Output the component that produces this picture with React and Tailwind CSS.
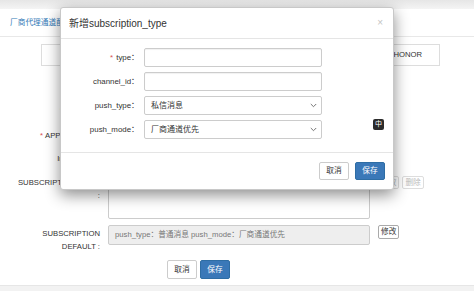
import React from 'react';

const FieldLabel = ({ children, required }) => (
  <div className="w-[78px] shrink-0 text-right text-[7.9px] text-[#333]">
    {required && <span className="text-[#d9534f] mr-[3px]">*</span>}
    {children}
  </div>
);

const Chevron = () => (
  <svg width="7" height="5" viewBox="0 0 7 5" className="text-[#666]">
    <path d="M0.8 1 L3.5 3.7 L6.2 1" fill="none" stroke="currentColor" strokeWidth="0.9" />
  </svg>
);

const Modal = () => (
  <div className="absolute left-[60px] top-[7px] w-[334px] h-[183px] bg-white rounded-[3px] border border-[#c8c8c8] shadow-[0_5px_15px_rgba(0,0,0,0.45)] flex flex-col">
    <div className="h-[31px] shrink-0 flex items-center justify-between pl-[8px] pr-[10px] border-b border-[#e5e5e5]">
      <span className="text-[10px] text-[#333]">新增subscription_type</span>
      <span className="text-[10px] text-[#c4c4c4] leading-none">×</span>
    </div>
    <div className="flex-1 flex flex-col gap-[5px] pt-[9px]">
      <div className="flex items-center gap-[5px]">
        <FieldLabel required>type：</FieldLabel>
        <div className="w-[178px] h-[19px] border border-[#ccc] rounded-[2px] shadow-[inset_0_1px_1px_rgba(0,0,0,0.06)]" />
      </div>
      <div className="flex items-center gap-[5px]">
        <FieldLabel>channel_id：</FieldLabel>
        <div className="w-[178px] h-[19px] border border-[#ccc] rounded-[2px] shadow-[inset_0_1px_1px_rgba(0,0,0,0.06)]" />
      </div>
      <div className="flex items-center gap-[5px]">
        <FieldLabel>push_type：</FieldLabel>
        <div className="w-[178px] h-[19px] border border-[#ccc] rounded-[2px] flex items-center justify-between pl-[6px] pr-[4px] text-[8px] text-[#333]">
          <span>私信消息</span>
          <Chevron />
        </div>
      </div>
      <div className="flex items-center gap-[5px]">
        <FieldLabel>push_mode：</FieldLabel>
        <div className="w-[178px] h-[19px] border border-[#ccc] rounded-[2px] flex items-center justify-between pl-[6px] pr-[4px] text-[8px] text-[#333]">
          <span>厂商通道优先</span>
          <Chevron />
        </div>
      </div>
    </div>
    <div className="h-[37px] shrink-0 border-t border-[#e5e5e5] flex items-center justify-end gap-[6px] pr-[8px]">
      <button className="w-[30px] h-[18px] border border-[#ccc] rounded-[2px] bg-white text-[7.7px] text-[#333]">取消</button>
      <button className="w-[30px] h-[18px] border border-[#2e6da4] rounded-[2px] bg-[#3a78b8] text-[7.7px] text-white">保存</button>
    </div>
    <div className="absolute left-[312px] top-[111px] w-[11px] h-[11px] rounded-[2px] bg-[#2b2b2b] text-white text-[7px] flex items-center justify-center">中</div>
  </div>
);

const Label = ({ children, required }) => (
  <div className="w-[100px] shrink-0 text-right text-[7.7px] leading-[13px] text-[#333]">
    {required && <span className="text-[#d9534f] mr-[2px]">*</span>}
    {children}
  </div>
);

export default function App() {
  return (
    <div className="relative w-[474px] h-[291px] overflow-hidden bg-white font-['Liberation_Sans','Noto_Sans_CJK_SC',sans-serif] text-[#333] flex flex-col">
      <div className="h-[9px] shrink-0 bg-gradient-to-b from-[#e6e6e6] to-[#f4f4f4]" />
      <div className="h-[28px] shrink-0 border-b border-[#e8e8e8] flex items-center pl-[10px] text-[7.7px] text-[#337ab7]">厂商代理通道配置</div>
      <div className="ml-[41px] mt-[7px] w-[399px] h-[22px] shrink-0 border border-[#ddd] flex items-center justify-end pr-[17px] text-[7.7px] text-[#333]">
        <span>HONOR</span>
      </div>

      <div className="mt-[38px] flex items-center">
        <Label required>通道名称 :</Label>
      </div>
      <div className="mt-[12px] flex items-center">
        <Label required>APP_SECRET :</Label>
      </div>
      <div className="mt-[10px] flex items-center">
        <Label>Intent_URL :</Label>
      </div>
      <div className="mt-[11px] flex items-start">
        <div className="pt-[0px]">
          <Label>SUBSCRIPTION_TYPE<br />:</Label>
        </div>
        <div className="ml-[8px] w-[262px] h-[43px] border border-[#ccc] rounded-[2px]" />
        <div className="ml-[8px] flex gap-[3px]">
          <button className="h-[13px] px-[2px] border border-[#ddd] rounded-[2px] text-[7.7px] text-[#bbb] leading-none">修改</button>
          <button className="h-[13px] px-[2px] border border-[#ddd] rounded-[2px] text-[7.7px] text-[#bbb] leading-none">删除</button>
        </div>
      </div>
      <div className="mt-[6px] flex items-start">
        <div className="pt-[2px]">
          <Label>SUBSCRIPTION<br />DEFAULT :</Label>
        </div>
        <div className="ml-[8px] w-[262px] h-[20px] border border-[#ccc] rounded-[2px] bg-[#eee] flex items-center pl-[6px] text-[7.7px] text-[#777]">
          push_type：普通消息 push_mode：厂商通道优先
        </div>
        <button className="ml-[8px] h-[14px] px-[2px] border border-[#aaa] rounded-[2px] bg-white text-[7.7px] text-[#333] leading-none">修改</button>
      </div>
      <div className="mt-[7px] ml-[167px] flex gap-[3px]">
        <button className="w-[30px] h-[19px] border border-[#ccc] rounded-[2px] bg-white text-[7.7px] text-[#333]">取消</button>
        <button className="w-[30px] h-[19px] border border-[#2e6da4] rounded-[2px] bg-[#3a78b8] text-[7.7px] text-white">保存</button>
      </div>
      <div className="flex-1" />
      <div className="h-[6px] shrink-0 bg-[#f2f2f2] border-t border-[#e6e6e6]" />

      <Modal />
    </div>
  );
}
